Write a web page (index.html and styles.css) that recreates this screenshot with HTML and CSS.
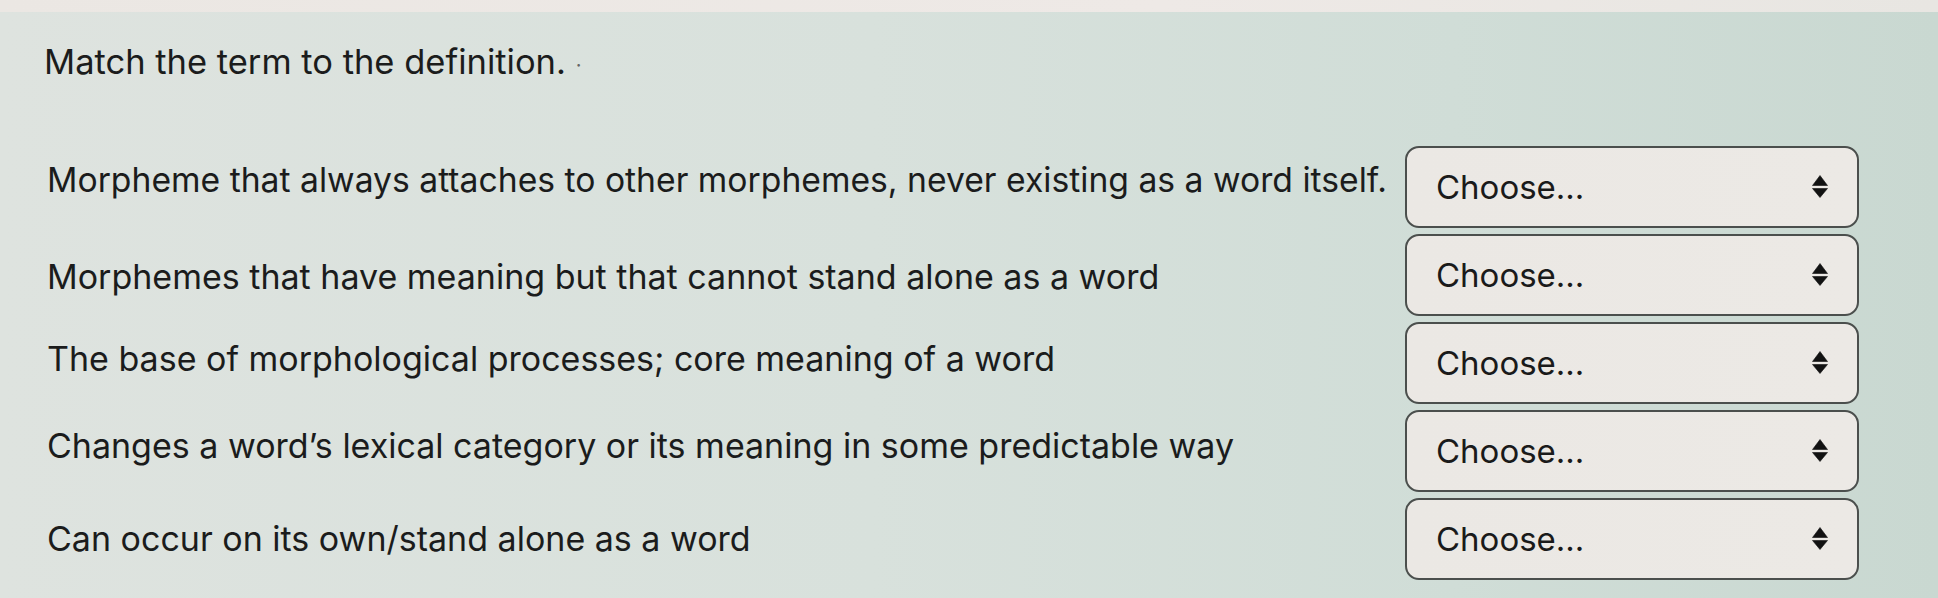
FILE: index.html
```html
<!DOCTYPE html>
<html>
<head>
<meta charset="utf-8">
<link rel="stylesheet" href="styles.css">
</head>
<body>
<div class="topstrip"></div>
<main class="panel">
  <h1 class="title">Match the term to the definition. <span class="dot">·</span></h1>
  <div class="grid">
    <div class="label l1">Morpheme that always attaches to other morphemes, never existing as a word itself.</div>
    <div class="select"><span class="choose">Choose...</span><svg class="arrows" viewBox="0 0 16 23" width="16" height="23"><path d="M0.5 10.5 L8 0.5 L15.5 10.5 Z M0.5 13.5 L8 22.5 L15.5 13.5 Z" fill="#121212" stroke="#121212" stroke-width="0.6" stroke-linejoin="round"/></svg></div>

    <div class="label l2">Morphemes that have meaning but that cannot stand alone as a word</div>
    <div class="select"><span class="choose">Choose...</span><svg class="arrows" viewBox="0 0 16 23" width="16" height="23"><path d="M0.5 10.5 L8 0.5 L15.5 10.5 Z M0.5 13.5 L8 22.5 L15.5 13.5 Z" fill="#121212" stroke="#121212" stroke-width="0.6" stroke-linejoin="round"/></svg></div>

    <div class="label l3">The base of morphological processes; core meaning of a word</div>
    <div class="select"><span class="choose">Choose...</span><svg class="arrows" viewBox="0 0 16 23" width="16" height="23"><path d="M0.5 10.5 L8 0.5 L15.5 10.5 Z M0.5 13.5 L8 22.5 L15.5 13.5 Z" fill="#121212" stroke="#121212" stroke-width="0.6" stroke-linejoin="round"/></svg></div>

    <div class="label l4">Changes a word’s lexical category or its meaning in some predictable way</div>
    <div class="select"><span class="choose">Choose...</span><svg class="arrows" viewBox="0 0 16 23" width="16" height="23"><path d="M0.5 10.5 L8 0.5 L15.5 10.5 Z M0.5 13.5 L8 22.5 L15.5 13.5 Z" fill="#121212" stroke="#121212" stroke-width="0.6" stroke-linejoin="round"/></svg></div>

    <div class="label l5">Can occur on its own/stand alone as a word</div>
    <div class="select"><span class="choose">Choose...</span><svg class="arrows" viewBox="0 0 16 23" width="16" height="23"><path d="M0.5 10.5 L8 0.5 L15.5 10.5 Z M0.5 13.5 L8 22.5 L15.5 13.5 Z" fill="#121212" stroke="#121212" stroke-width="0.6" stroke-linejoin="round"/></svg></div>
  </div>
</main>
</body>
</html>
```
FILE: styles.css
```css
html, body {
  margin: 0;
  padding: 0;
  width: 1938px;
  height: 598px;
  overflow: hidden;
  font-family: Inter, "Liberation Sans", sans-serif;
  color: #1b1c1c;
}

.topstrip {
  height: 12px;
  background: linear-gradient(90deg, #ebe7e3 0%, #eee9e6 60%, #e8e6e2 100%);
}

.panel {
  height: 586px;
  box-sizing: border-box;
  padding: 28px 0 0 44px;
  background: linear-gradient(90deg, #dee3df 0%, #d8e1dc 45%, #d0ddd7 75%, #c9d8d1 100%);
}

.title {
  margin: 0;
  font-size: 34.5px;
  font-weight: 400;
  line-height: 44px;
}

.dot {
  font-size: 20px;
  color: #666;
  vertical-align: middle;
}

.grid {
  margin-top: 59px;
  padding-left: 3px;
  display: grid;
  grid-template-columns: 1358px 454px;
  grid-auto-rows: 82px;
  row-gap: 6px;
}

.label {
  font-size: 34px;
  white-space: nowrap;
  display: flex;
  align-items: center;
}

.l1 { padding-bottom: 14px; font-size: 33.7px; }
.l2 { padding-top: 4px; }
.l3 { padding-bottom: 8px; }
.l4 { padding-bottom: 10px; }
.l5 { padding-bottom: 0; }

.select {
  box-sizing: border-box;
  display: flex;
  align-items: center;
  justify-content: space-between;
  padding: 0 29px 0 29px;
  border: 2px solid #4b4f4d;
  border-radius: 14px;
  background: linear-gradient(90deg, #ebe8e4 0%, #ece9e5 100%);
}

.choose {
  font-size: 33px;
  color: #1a1a1a;
}

.arrows {
  display: block;
}
```
